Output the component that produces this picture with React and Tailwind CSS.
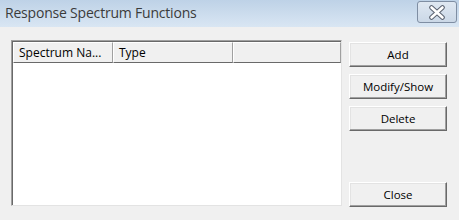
import React from 'react';

const font = { fontFamily: '"Open Sans", "Noto Sans", "Liberation Sans", sans-serif' };

function WinButton({ children, className = '' }) {
  return (
    <button
      className={`w-[98px] h-[25px] bg-[#f0f0f0] text-[11.5px] text-black border border-t-white border-l-white border-r-[#696969] border-b-[#696969] shadow-[inset_-1px_-1px_0_#a0a0a0,inset_1px_1px_0_#e3e3e3] ${className}`}
      style={font}
    >
      {children}
    </button>
  );
}

export default function App() {
  return (
    <div className="w-[459px] h-[220px] bg-[#f0f0f0] flex flex-col overflow-hidden" style={font}>
      {/* Title bar */}
      <div className="h-[27px] flex items-center justify-between pl-[5px] pr-[2px] bg-gradient-to-b from-[#bed2e7] to-[#d9e6f3]">
        <span className="text-[14px] tracking-[-0.2px] text-[#3b3b3b] leading-none -mt-[1px]">Response Spectrum Functions</span>
        <div className="w-[40px] h-[22px] mb-[3px] rounded-[3px] border border-[#7f8ea3] bg-gradient-to-b from-[#dfe8f2] to-[#cbd8e7] flex items-center justify-center">
          <svg width="18" height="15" viewBox="0 0 18 15">
            <path d="M3.5 2.5 L14.5 12.5 M14.5 2.5 L3.5 12.5" stroke="#5a6270" strokeWidth="4.6" strokeLinecap="round" />
            <path d="M3.5 2.5 L14.5 12.5 M14.5 2.5 L3.5 12.5" stroke="#ffffff" strokeWidth="2.6" strokeLinecap="round" />
          </svg>
        </div>
      </div>

      {/* Body */}
      <div className="flex pl-[11px] pt-[13px]">
        <div className="w-[331px] h-[166px] bg-white border border-t-[#a0a0a0] border-l-[#a0a0a0] border-r-[#e3e3e3] border-b-[#e3e3e3] shadow-[inset_1px_1px_0_#696969]">
          <div className="flex h-[21px] mt-[1px] ml-[1px] text-[12px] text-black leading-none">
            <div className="w-[100px] h-full bg-[#f0f0f0] border border-t-white border-l-white border-r-[#a0a0a0] border-b-[#696969] flex items-center pl-[5px]">
              Spectrum Na...
            </div>
            <div className="w-[120px] h-full bg-[#f0f0f0] border border-t-white border-l-white border-r-[#a0a0a0] border-b-[#696969] flex items-center pl-[5px]">
              Type
            </div>
            <div className="flex-1 h-full bg-[#f0f0f0] border border-t-white border-l-white border-r-[#a0a0a0] border-b-[#696969]" />
          </div>
        </div>

        <div className="ml-[7px] pt-[2px] flex flex-col">
          <WinButton>Add</WinButton>
          <WinButton className="mt-[7px]">Modify/Show</WinButton>
          <WinButton className="mt-[7px]">Delete</WinButton>
          <WinButton className="mt-[51px]">Close</WinButton>
        </div>
      </div>
    </div>
  );
}
